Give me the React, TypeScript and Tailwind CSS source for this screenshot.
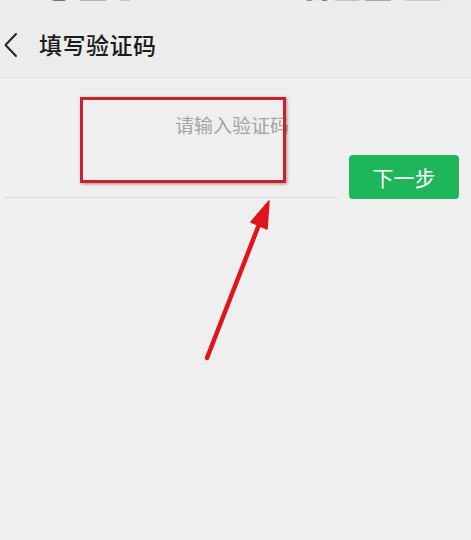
import React from "react";

const font = { fontFamily: '"Noto Sans CJK SC", "Noto Sans", sans-serif' };

function StatusBar() {
  // only the lower edge of the status bar is left in the crop
  return (
    <div className="relative h-[12px] overflow-hidden">
      <div className="absolute left-[52px] top-[-7px] flex items-center gap-[14px]">
        <div className="h-[8px] w-[14px] rounded-[2px] bg-[#777]" />
        <div className="h-[8px] w-[26px] bg-[#b5b5b5]" />
        <div className="h-[8px] w-[10px] bg-[#c0c0c0]" />
      </div>
      <div className="absolute left-[305px] top-[-7px] flex items-center gap-[6px]">
        <div className="h-[8px] w-[9px] rounded-full bg-[#888]" />
        <div className="h-[8px] w-[9px] rounded-full bg-[#777]" />
        <div className="h-[8px] w-[24px] bg-[#c0c0c0]" />
        <div className="h-[8px] w-[26px] bg-[#a8a8a8]" />
        <div className="ml-[8px] h-[8px] w-[36px] bg-[#c8c8c8]" />
      </div>
    </div>
  );
}

function Header() {
  return (
    <div className="flex h-[66px] items-center gap-[20px] border-b border-[#e4e4e4] bg-[#ececec] pl-[3px]">
      <svg width="16" height="26" viewBox="0 0 16 26" fill="none">
        <path d="M13 2 L2.5 13 L13 24" stroke="#222" strokeWidth="2" strokeLinecap="round" strokeLinejoin="round" />
      </svg>
      <h1 className="text-[23px] font-medium leading-none tracking-[0.5px] text-[#1b1b1b]">填写验证码</h1>
    </div>
  );
}

function CodeRow() {
  return (
    <div className="flex items-end gap-[12px] pl-[5px] pr-[12px] pt-[18px]">
      <div className="flex h-[102px] flex-1 items-start border-b border-[#d6d6d6] pl-[170px] pt-[15px]">
        <input
          className="w-[130px] bg-transparent text-[19px] leading-none text-[#a3a3a3] outline-none placeholder:text-[#a3a3a3]"
          placeholder="请输入验证码"
          style={font}
        />
      </div>
      <button className="mb-[-1px] h-[44px] w-[110px] rounded-[4px] bg-[#1db65a] text-[21px] leading-none text-white">
        下一步
      </button>
    </div>
  );
}

function Annotation() {
  return (
    <>
      <div className="pointer-events-none absolute left-[80px] top-[97px] h-[86px] w-[206px] border-[3px] border-[#c5222b] shadow-[1px_1px_3px_rgba(120,0,0,0.45)]" />
      <svg className="pointer-events-none absolute left-0 top-0" width="471" height="540">
        <line x1="207" y1="358" x2="260" y2="222" stroke="#e0141b" strokeWidth="4.5" strokeLinecap="round" />
        <polygon points="269,201 267,229 251,222" fill="#e0141b" stroke="#e0141b" strokeWidth="1.5" strokeLinejoin="round" />
      </svg>
    </>
  );
}

export default function App() {
  return (
    <div className="relative h-[540px] w-[471px] overflow-hidden bg-[#efefef]" style={font}>
      <div className="bg-[#ececec]">
        <StatusBar />
      </div>
      <Header />
      <CodeRow />
      <Annotation />
    </div>
  );
}
